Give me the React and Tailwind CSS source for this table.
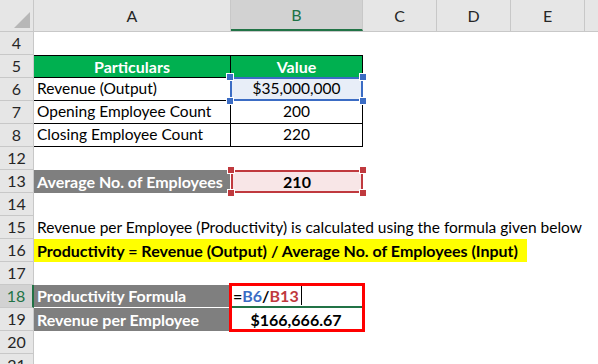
const font = { fontFamily: "Lato, 'Open Sans', sans-serif" };

function ColHead({ label, className }) {
  return (
    <div
      className={`flex h-full items-center justify-center border-r border-[#c8c8c8] text-[16px] text-[#262626] ${className}`}
    >
      {label}
    </div>
  );
}

function RowHead({ n, active }) {
  return (
    <div
      className={
        active
          ? "flex w-[34px] shrink-0 items-center justify-center border-r-2 border-b border-r-[#217346] border-b-[#c8c8c8] bg-[#d2d2d2] text-[16px] text-[#217346]"
          : "flex w-[34px] shrink-0 items-center justify-center border-r border-b border-[#c8c8c8] bg-[#e6e6e6] text-[16px] text-[#262626]"
      }
    >
      {n}
    </div>
  );
}

function Row({ n, active, children }) {
  return (
    <div className="flex h-[23px]">
      <RowHead n={n} active={active} />
      <div className="flex min-w-0 flex-1 bg-white">{children}</div>
    </div>
  );
}

function Handle({ className }) {
  return <span className={`absolute h-[6px] w-[6px] ${className}`} />;
}

export default function App() {
  return (
    <div className="h-[364px] w-[598px] overflow-hidden bg-white text-[15.5px] text-black" style={font}>
      {/* column headers */}
      <div className="flex h-[32px] border-b border-[#c8c8c8] bg-[#e6e6e6]">
        <div className="relative w-[34px] shrink-0 border-r border-[#c8c8c8]">
          <svg className="absolute right-[3px] bottom-[3px]" width="16" height="16" viewBox="0 0 16 16">
            <polygon points="16,0 16,16 0,16" fill="#b7b7b7" />
          </svg>
        </div>
        <ColHead label="A" className="w-[197px] shrink-0" />
        <ColHead
          label="B"
          className="w-[132px] shrink-0 border-b-2 border-b-[#217346] bg-[#d2d2d2] !text-[#217346]"
        />
        <ColHead label="C" className="w-[74px] shrink-0" />
        <ColHead label="D" className="w-[74px] shrink-0" />
        <ColHead label="E" className="w-[74px] shrink-0" />
        <div className="flex-1" />
      </div>

      <Row n={4} />

      <Row n={5}>
        <div className="flex w-[197px] items-center justify-center border-t border-r border-b border-black bg-[#00b050] text-[16px] font-bold text-white">
          Particulars
        </div>
        <div className="flex w-[132px] items-center justify-center border-t border-r border-b border-black bg-[#00b050] text-[16px] font-bold text-white">
          Value
        </div>
      </Row>

      <Row n={6}>
        <div className="flex w-[197px] items-center border-r border-b border-black pl-[3px]">
          Revenue (Output)
        </div>
        <div className="relative flex w-[132px] items-center justify-center border-r border-b border-black">
          <div className="absolute -top-px -left-px right-[-1px] bottom-[-1px] border-2 border-[#3b6cc4] bg-[#e8eef8]" />
          <span className="relative">$35,000,000</span>
          <Handle className="-top-[4px] -left-[4px] bg-[#3b6cc4] outline outline-1 outline-white" />
          <Handle className="-bottom-[4px] -left-[4px] bg-[#3b6cc4] outline outline-1 outline-white" />
          <Handle className="-top-[4px] -right-[4px] bg-[#3b6cc4] outline outline-1 outline-white" />
          <Handle className="-bottom-[4px] -right-[4px] bg-[#3b6cc4] outline outline-1 outline-white" />
        </div>
      </Row>

      <Row n={7}>
        <div className="flex w-[197px] items-center border-r border-b border-black pl-[3px]">
          Opening Employee Count
        </div>
        <div className="flex w-[132px] items-center justify-center border-r border-b border-black">200</div>
      </Row>

      <Row n={8}>
        <div className="flex w-[197px] items-center border-r border-b border-black pl-[3px]">
          Closing Employee Count
        </div>
        <div className="flex w-[132px] items-center justify-center border-r border-b border-black">220</div>
      </Row>

      <Row n={12} />

      <Row n={13}>
        <div className="flex w-[196px] items-center bg-[#7f7f7f] pl-[3px] text-[16px] font-bold text-white">
          Average No. of Employees
        </div>
        <div className="relative ml-[1px] flex w-[132px] items-center justify-center">
          <div className="absolute inset-0 border-2 border-[#c0393e] bg-[#f8e6e7]" />
          <span className="relative text-[16px] font-bold">210</span>
          <Handle className="-top-[3px] -left-[3px] bg-[#c0393e] outline outline-1 outline-white" />
          <Handle className="-bottom-[3px] -left-[3px] bg-[#c0393e] outline outline-1 outline-white" />
          <Handle className="-top-[3px] -right-[3px] bg-[#c0393e] outline outline-1 outline-white" />
          <Handle className="-bottom-[3px] -right-[3px] bg-[#c0393e] outline outline-1 outline-white" />
        </div>
      </Row>

      <Row n={14} />

      <Row n={15}>
        <div className="flex items-center whitespace-nowrap pl-[3px]">
          Revenue per Employee (Productivity) is calculated using the formula given below
        </div>
      </Row>

      <Row n={16}>
        <div className="flex w-[493px] items-center whitespace-nowrap bg-[#ffff00] pl-[3px] text-[16px] font-bold">
          Productivity = Revenue (Output) / Average No. of Employees (Input)
        </div>
      </Row>

      <Row n={17} />

      <div className="relative">
        <Row n={18} active>
          <div className="flex w-[196px] items-center border-b border-white bg-[#7f7f7f] pl-[3px] text-[16px] font-bold text-white">
            Productivity Formula
          </div>
          <div className="flex w-[132px] items-center border-b-2 border-[#217346] pl-[3px] text-[16px] font-bold">
            <span>=</span>
            <span className="text-[#3b6cc4]">B6</span>
            <span>/</span>
            <span className="text-[#c0393e]">B13</span>
            <span className="ml-[2px] h-[19px] w-px bg-black" />
          </div>
        </Row>
        <Row n={19}>
          <div className="flex w-[196px] items-center bg-[#7f7f7f] pl-[3px] text-[16px] font-bold text-white">
            Revenue per Employee
          </div>
          <div className="flex w-[132px] items-center justify-center text-[16px] font-bold">$166,666.67</div>
        </Row>
        <div className="pointer-events-none absolute top-[-2px] left-[229px] h-[49px] w-[136px] border-[3px] border-[#ff0000]" />
      </div>

      <Row n={20} />
      <Row n={21} />
    </div>
  );
}
